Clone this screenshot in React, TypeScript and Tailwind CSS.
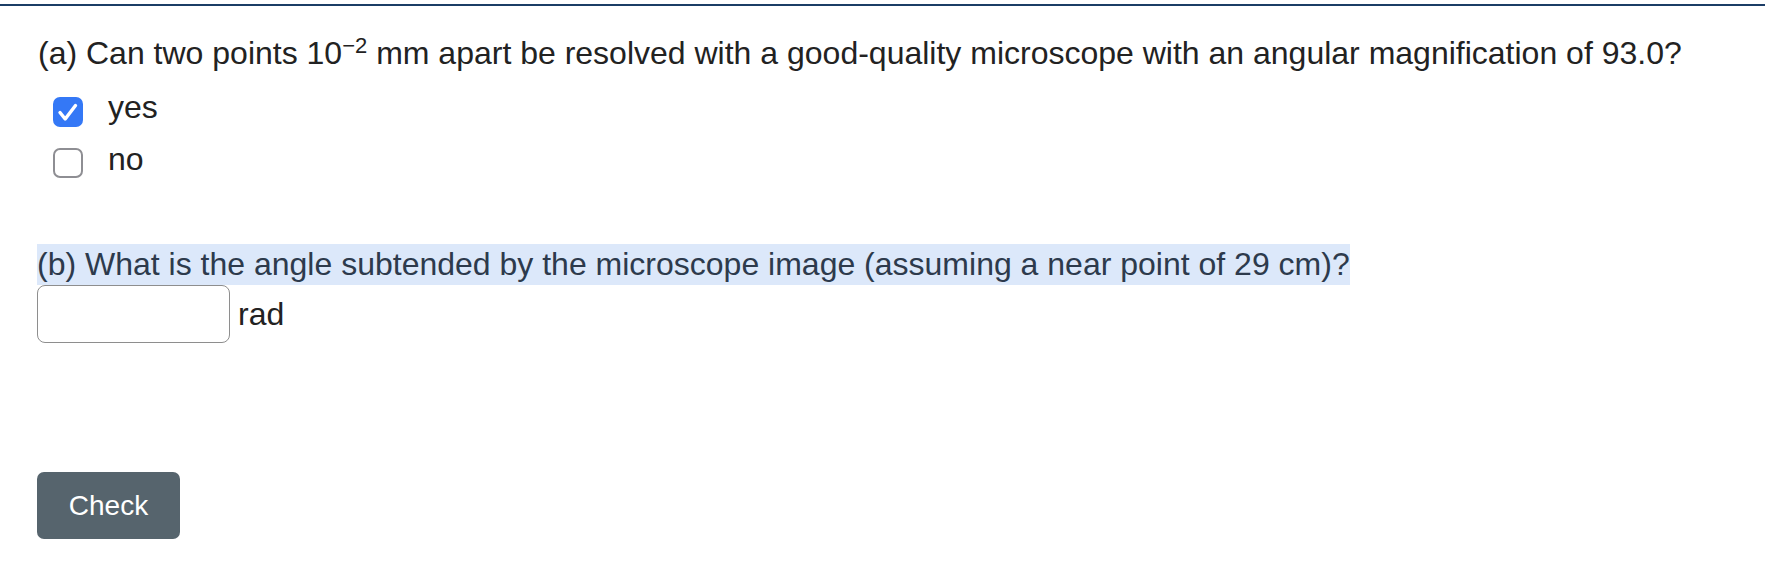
import React from "react";

// Question page: two parts and a check button
export default function App() {
  return (
    <div className="w-[1765px] h-[563px] bg-white font-['Liberation_Sans',Arial,Helvetica,sans-serif] text-[#222222]">
      <div className="pt-1">
        <div className="h-[2px] bg-[#1b3d66]" />
      </div>

      <div className="pl-[37px] pt-[27px]">
        <p className="text-[32px] leading-[41px] pl-[1px]">
          (a) Can two points 10<sup className="text-[22px]">−2</sup> mm apart be resolved with a good-quality
          microscope with an angular magnification of 93.0?
        </p>

        <div className="mt-[13px] flex flex-col gap-[11px]">
          <label className="flex items-start text-[32px] leading-[41px]">
            <span className="ml-[16px] mt-[10px] h-[30px] w-[30px] rounded-[7px] bg-[#3478f6]">
              <svg width="30" height="30" viewBox="0 0 30 30" fill="none">
                <path
                  d="M7 15.5 L12.2 22 L22.5 8.5"
                  stroke="white"
                  strokeWidth="3.4"
                  strokeLinecap="round"
                  strokeLinejoin="round"
                />
              </svg>
            </span>
            <span className="ml-[25px]">yes</span>
          </label>
          <label className="flex items-start text-[32px] leading-[41px]">
            <span className="ml-[16px] mt-[9px] h-[30px] w-[30px] rounded-[7px] border-[2.5px] border-[#8e8e93] bg-white" />
            <span className="ml-[25px]">no</span>
          </label>
        </div>

        <div className="mt-[64px] w-fit bg-[#dce8fa] text-[32px] leading-[41px] text-[#2d3a4c]">
          (b) What is the angle subtended by the microscope image (assuming a near point of 29 cm)?
        </div>

        <div className="flex items-center">
          <input
            type="text"
            className="h-[58px] w-[193px] rounded-[8px] border-[1.5px] border-[#8e8e8e] bg-white outline-none"
          />
          <span className="ml-[8px] text-[32px] leading-[41px]">rad</span>
        </div>

        <button className="mt-[129px] flex h-[67px] w-[143px] items-center justify-center rounded-[7px] bg-[#56646d] text-[28px] text-white">
          Check
        </button>
      </div>
    </div>
  );
}
